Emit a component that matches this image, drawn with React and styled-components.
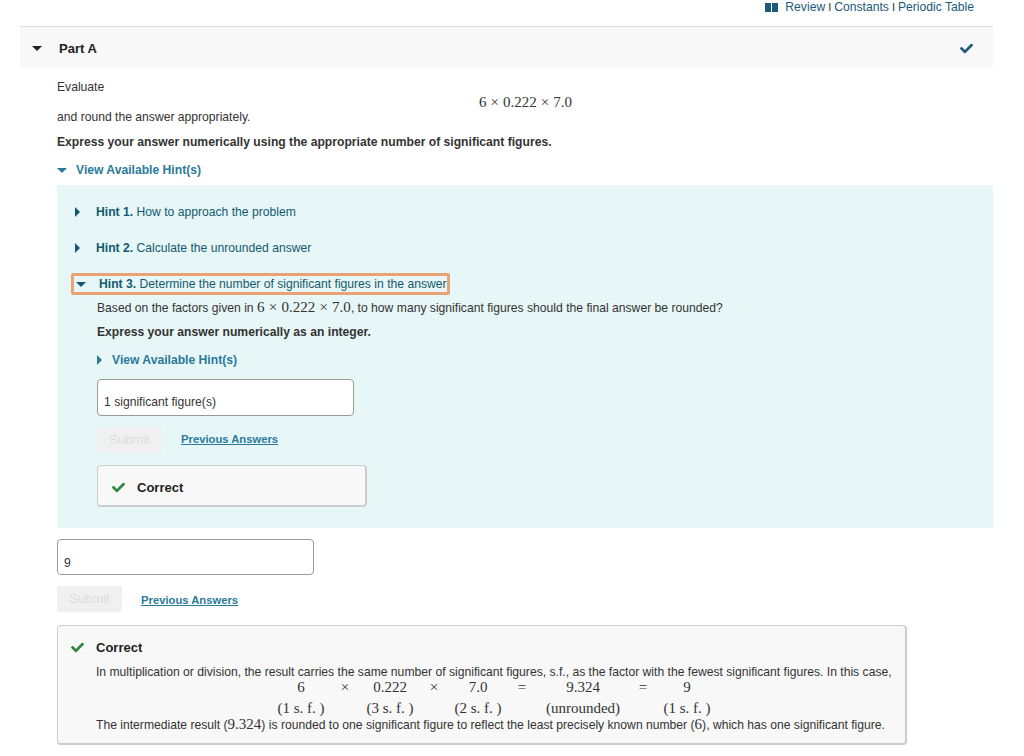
import React from 'react'
import styled, { createGlobalStyle } from 'styled-components'
import { FaCheck } from 'react-icons/fa'

const GlobalStyle = createGlobalStyle`
  body {
    margin: 0;
    background: #fff;
    color: #333;
    font-family: "Liberation Sans", Arial, sans-serif;
    font-size: 12.15px;
  }
`

const Page = styled.div`
  width: 973px;
  margin-left: 20px;
`

const TopBar = styled.div`
  height: 26px;
  padding: 0 19px 0 0;
  border-bottom: 1px solid #ddd;
  display: flex;
  justify-content: flex-end;
  align-items: flex-start;
  gap: 3px;
  line-height: 14px;
  color: #1c5a7c;
`

const TopSeparator = styled.span`
  color: #333;
  font-size: 11px;
`

const BookIcon = styled.svg`
  width: 13px;
  height: 9px;
  margin: 3px 4px 0 0;
  fill: #1c5a7c;
`

const PartHeader = styled.div`
  height: 41px;
  box-sizing: border-box;
  padding: 2px 20px 0 12px;
  background: #f8f8f8;
  display: flex;
  align-items: center;
  font-size: 13px;
  font-weight: bold;
  color: #222;
`

const PartTitle = styled.span`
  margin-left: 17px;
  flex: 1;
`

const Caret = styled.span`
  display: inline-block;
  flex: none;
  width: 0;
  height: 0;
  ${p => (p.$open
    ? `border-left: ${p.$size}px solid transparent;
       border-right: ${p.$size}px solid transparent;
       border-top: ${p.$size}px solid ${p.$color};`
    : `border-top: ${p.$size}px solid transparent;
       border-bottom: ${p.$size}px solid transparent;
       border-left: ${p.$size}px solid ${p.$color};`)}
`

const Body = styled.div`
  padding: 10px 0 0 37px;
`

const Line = styled.div`
  height: 18px;
  line-height: 18px;
  margin-top: ${p => p.$top || 0}px;
`

const DisplayMath = styled.div`
  height: 12px;
  line-height: 12px;
  text-align: center;
  font-family: "Liberation Serif", serif;
  font-size: 15px;
  word-spacing: 0.3px;
  margin-right: -1px;
`

const Strong = styled.div`
  height: 18px;
  line-height: 18px;
  font-weight: bold;
  margin-top: ${p => p.$top || 7}px;
`

const HintToggle = styled.div`
  display: flex;
  align-items: center;
  gap: ${p => p.$gap}px;
  height: 18px;
  margin-top: ${p => p.$top}px;
  font-weight: bold;
  color: #2a7a9c;
`

const HintPanel = styled.div`
  height: 343px;
  box-sizing: border-box;
  margin-top: 6px;
  padding: 18px 0 0 17px;
  background: #e7f6f6;
`

const HintRow = styled.div`
  display: flex;
  align-items: center;
  height: 18px;
  margin-bottom: 18px;
  color: #135a70;
  gap: 16px;
  padding-left: 1px;
`

const ActiveHintRow = styled.div`
  display: flex;
  align-items: center;
  height: 22px;
  width: 379px;
  box-sizing: border-box;
  margin-top: -2px;
  margin-left: -3px;
  padding-left: 2px;
  gap: 13px;
  border: 3px solid #e8a274;
  border-radius: 2px;
  color: #135a70;
  white-space: nowrap;
`

const HintBody = styled.div`
  padding-left: 23px;
`

const InlineMath = styled.span`
  font-family: "Liberation Serif", serif;
  font-size: 15px;
  word-spacing: 0.5px;
`

const AnswerInput = styled.div`
  width: 257px;
  height: ${p => p.$h}px;
  box-sizing: border-box;
  margin-top: ${p => p.$top}px;
  padding: ${p => p.$pad}px 0 0 6px;
  background: #fff;
  border: 1px solid #999;
  border-radius: 4px;
  line-height: 16px;
  color: #333;
`

const SubmitRow = styled.div`
  display: flex;
  align-items: center;
  gap: 19px;
  margin-top: 11px;
`

const SubmitButton = styled.div`
  width: 65px;
  height: 26px;
  line-height: 26px;
  text-align: center;
  background: #f0f0f0;
  border-radius: 2px;
  color: #ddd;
  font-size: 13px;
`

const PrevLink = styled.a`
  font-size: 11.25px;
  font-weight: bold;
  color: #2a7a9c;
  text-decoration: underline;
  margin-top: ${p => p.$shift}px;
`

const ShortCorrect = styled.div`
  width: 270px;
  height: 42px;
  box-sizing: border-box;
  margin-top: 12px;
  padding: 3px 0 0 14px;
  display: flex;
  align-items: center;
  gap: 12px;
  background: #f8f8f8;
  border: 1px solid #ccc;
  border-bottom-width: 2px;
  border-right-width: 2px;
  border-radius: 4px;
  font-size: 13px;
  font-weight: bold;
  color: #222;
`

const GreenCheck = styled(FaCheck)`
  color: #2e8540;
  width: 13px;
  height: 13px;
  flex: none;
`

const FeedbackBox = styled.div`
  width: 850px;
  height: 120px;
  box-sizing: border-box;
  margin-top: 13px;
  padding: 12px 0 0 13px;
  background: #f8f8f8;
  border: 1px solid #ccc;
  border-bottom-width: 2px;
  border-right-width: 2px;
  border-radius: 4px;
`

const FeedbackTitle = styled.div`
  display: flex;
  align-items: center;
  gap: 12px;
  height: 18px;
  font-size: 13px;
  font-weight: bold;
  color: #222;
`

const FeedbackText = styled.div`
  padding-left: 25px;
  margin-top: ${p => p.$top}px;
  line-height: 16px;
  height: 16px;
  white-space: nowrap;
`

const EquationGrid = styled.div`
  display: grid;
  grid-template-columns: 46px 42px 48px 40px 48px 40px 82px 38px 50px;
  grid-template-rows: 19px 23px;
  margin: -3px 0 0 207px;
  width: 434px;
  align-items: center;
  justify-items: center;
  font-family: "Liberation Serif", serif;
  font-size: 15px;
  line-height: 16px;
  white-space: nowrap;
`

const topCells = ['6', '×', '0.222', '×', '7.0', '=', '9.324', '=', '9']
const bottomCells = ['(1 s. f. )', '', '(3 s. f. )', '', '(2 s. f. )', '', '(unrounded)', '', '(1 s. f. )']

export default function App() {
  return (
    <Page>
      <GlobalStyle />
      <TopBar>
        <BookIcon viewBox="0 0 13 9">
          <path d="M0 0h6v9H0zM7 0h6v9H7z" />
        </BookIcon>
        <span>Review</span>
        <TopSeparator>I</TopSeparator>
        <span>Constants</span>
        <TopSeparator>I</TopSeparator>
        <span>Periodic Table</span>
      </TopBar>

      <PartHeader>
        <Caret $open $size={5} $color="#222" />
        <PartTitle>Part A</PartTitle>
        <FaCheck size={13} color="#1c5a7c" />
      </PartHeader>

      <Body>
        <Line>Evaluate</Line>
        <DisplayMath>6 × 0.222 × 7.0</DisplayMath>
        <Line>and round the answer appropriately.</Line>
        <Strong>Express your answer numerically using the appropriate number of significant figures.</Strong>
        <HintToggle $top={10} $gap={9}>
          <Caret $open $size={5} $color="#2a7a9c" />
          View Available Hint(s)
        </HintToggle>

        <HintPanel>
          <HintRow>
            <Caret $size={5} $color="#135a70" />
            <span><b>Hint 1.</b> How to approach the problem</span>
          </HintRow>
          <HintRow>
            <Caret $size={5} $color="#135a70" />
            <span><b>Hint 2.</b> Calculate the unrounded answer</span>
          </HintRow>
          <ActiveHintRow>
            <Caret $open $size={5} $color="#135a70" />
            <span><b>Hint 3.</b> Determine the number of significant figures in the answer</span>
          </ActiveHintRow>
          <HintBody>
            <Line $top={3}>
              Based on the factors given in <InlineMath>6 × 0.222 × 7.0</InlineMath>, to how many significant figures should the final answer be rounded?
            </Line>
            <Strong $top={7}>Express your answer numerically as an integer.</Strong>
            <HintToggle $top={10} $gap={10}>
              <Caret $size={5} $color="#2a7a9c" />
              View Available Hint(s)
            </HintToggle>
            <AnswerInput $h={37} $top={10} $pad={14}>1 significant figure(s)</AnswerInput>
            <SubmitRow>
              <SubmitButton>Submit</SubmitButton>
              <PrevLink $shift={-2}>Previous Answers</PrevLink>
            </SubmitRow>
            <ShortCorrect>
              <GreenCheck />
              Correct
            </ShortCorrect>
          </HintBody>
        </HintPanel>

        <AnswerInput $h={36} $top={11} $pad={15}>9</AnswerInput>
        <SubmitRow>
          <SubmitButton>Submit</SubmitButton>
          <PrevLink $shift={2}>Previous Answers</PrevLink>
        </SubmitRow>

        <FeedbackBox>
          <FeedbackTitle>
            <GreenCheck />
            Correct
          </FeedbackTitle>
          <FeedbackText $top={8}>
            In multiplication or division, the result carries the same number of significant figures, s.f., as the factor with the fewest significant figures. In this case,
          </FeedbackText>
          <EquationGrid>
            {topCells.map((c, i) => <span key={i}>{c}</span>)}
            {bottomCells.map((c, i) => <span key={i}>{c}</span>)}
          </EquationGrid>
          <FeedbackText $top={-3}>
            The intermediate result (<InlineMath>9.324</InlineMath>) is rounded to one significant figure to reflect the least precisely known number (<InlineMath>6</InlineMath>), which has one significant figure.
          </FeedbackText>
        </FeedbackBox>
      </Body>
    </Page>
  )
}
